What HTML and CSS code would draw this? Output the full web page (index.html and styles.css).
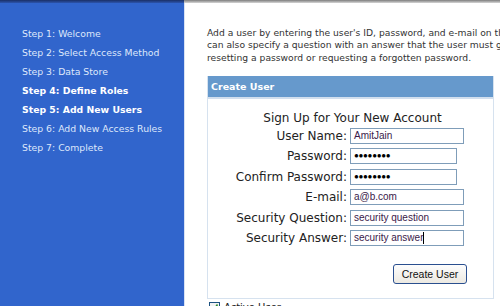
FILE: index.html
```html
<!DOCTYPE html>
<html>
<head>
<meta charset="utf-8">
<link rel="stylesheet" href="styles.css">
</head>
<body>
<div class="topbar"><div class="top-left"></div><div class="top-right"></div></div>
<div class="main">
  <nav class="sidebar">
    <div class="step">Step 1: Welcome</div>
    <div class="step">Step 2: Select Access Method</div>
    <div class="step">Step 3: Data Store</div>
    <div class="step bold">Step 4: Define Roles</div>
    <div class="step bold">Step 5: Add New Users</div>
    <div class="step">Step 6: Add New Access Rules</div>
    <div class="step">Step 7: Complete</div>
  </nav>
  <section class="content">
    <p class="intro"><span class="line">Add a user by entering the user's ID, password, and e-mail on this page. You</span><span class="line">can also specify a question with an answer that the user must give when</span><span class="line">resetting a password or requesting a forgotten password.</span></p>
    <div class="panel">
      <div class="panel-head">Create User</div>
      <div class="panel-body">
        <div class="title">Sign Up for Your New Account</div>
        <div class="row"><span class="label">User Name:</span><span class="input wide">AmitJain</span></div>
        <div class="row"><span class="label">Password:</span><span class="input narrow dots">●●●●●●●●</span></div>
        <div class="row"><span class="label">Confirm Password:</span><span class="input narrow dots">●●●●●●●●</span></div>
        <div class="row"><span class="label">E-mail:</span><span class="input wide">a@b.com</span></div>
        <div class="row"><span class="label">Security Question:</span><span class="input wide">security question</span></div>
        <div class="row"><span class="label">Security Answer:</span><span class="input wide">security answer<span class="caret"></span></span></div>
        <div class="btnrow"><span class="button">Create User</span></div>
      </div>
    </div>
    <div class="active"><span class="check"><svg width="9" height="9" viewBox="0 0 9 9"><path d="M1.5 4.5 L3.5 7 L7.5 1.5" fill="none" stroke="#2a8a2a" stroke-width="1.6"/></svg></span>Active User</div>
  </section>
</div>
</body>
</html>
```
FILE: styles.css
```css
html, body {
  margin: 0;
  padding: 0;
}
body {
  width: 500px;
  height: 306px;
  overflow: hidden;
  background: #fff;
  font-family: "DejaVu Sans", Tahoma, sans-serif;
}
.topbar {
  display: flex;
  height: 3px;
}
.top-left {
  width: 184px;
  background: linear-gradient(#1a2f66, #2c55ad);
}
.top-right {
  flex: 1;
  background: linear-gradient(#7d7d7d, #d6d6d6);
}
.main {
  display: flex;
  height: 303px;
}
.sidebar {
  width: 185px;
  flex: none;
  background: #3165cc;
  border-right: 1px solid #d8e2f4;
  padding-top: 21px;
  padding-left: 22px;
  box-sizing: border-box;
}
.step {
  color: #dfe8fb;
  font-size: 9.3px;
  line-height: 19px;
  white-space: nowrap;
}
.step.bold {
  font-weight: bold;
  color: #fff;
}
.content {
  flex: 1;
  padding-left: 22px;
  overflow: hidden;
}
.intro {
  margin: 24px 0 0 0;
  font-size: 9.2px;
  line-height: 12.3px;
  color: #333;
  white-space: nowrap;
}
.line {
  display: block;
}
.panel {
  margin-top: 12px;
  width: 285px;
  border: 1px solid #d6e2ef;
  border-top: none;
}
.panel-head {
  background: #6699cc;
  color: #fff;
  font-weight: bold;
  font-size: 9.5px;
  line-height: 21px;
  padding-left: 3px;
  border-bottom: 2px solid #d2dfee;
}
.panel-body {
  height: 199px;
  padding-top: 11px;
  box-sizing: border-box;
}
.title {
  text-align: center;
  font-size: 12px;
  color: #222;
  line-height: 16px;
  padding-left: 4px;
}
.row {
  display: flex;
  align-items: center;
  height: 20.4px;
}
.label {
  width: 139px;
  text-align: right;
  font-size: 12px;
  color: #222;
  padding-right: 3px;
  flex: none;
}
.input {
  height: 16px;
  box-sizing: border-box;
  border: 1px solid #7f9db9;
  font-family: "Liberation Sans", Arial, sans-serif;
  font-size: 10px;
  color: #3a1a4a;
  line-height: 14px;
  padding-left: 3px;
  display: flex;
  align-items: center;
}
.input.wide { width: 114px; }
.input.narrow { width: 107px; }
.dots {
  font-size: 8px;
  letter-spacing: -0.3px;
  color: #000;
}
.caret {
  display: inline-block;
  width: 1px;
  height: 12px;
  background: #000;
}
.btnrow {
  display: flex;
  justify-content: flex-end;
  padding-right: 26px;
  margin-top: 16px;
}
.button {
  width: 74px;
  height: 20px;
  box-sizing: border-box;
  border: 1px solid #2a4f8f;
  border-radius: 3px;
  background: linear-gradient(#fdfdfd, #ece9e2);
  font-family: "Liberation Sans", Arial, sans-serif;
  font-size: 10.5px;
  color: #111;
  display: flex;
  align-items: center;
  justify-content: center;
}
.active {
  margin-top: 3px;
  padding-left: 2px;
  font-size: 10px;
  color: #222;
  display: flex;
  align-items: center;
}
.check {
  width: 9px;
  height: 9px;
  border: 1px solid #1c5180;
  background: #f2f2f2;
  margin-right: 4px;
  display: inline-flex;
}
```
